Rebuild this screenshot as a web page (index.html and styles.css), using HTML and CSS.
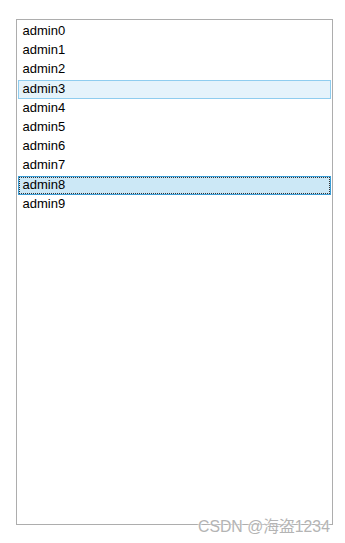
FILE: index.html
```html
<!DOCTYPE html>
<html>
<head>
<meta charset="utf-8">
<link rel="stylesheet" href="styles.css">
</head>
<body>
<div class="page">
  <ul class="listbox">
    <li class="item">admin0</li>
    <li class="item">admin1</li>
    <li class="item">admin2</li>
    <li class="item hover">admin3</li>
    <li class="item">admin4</li>
    <li class="item">admin5</li>
    <li class="item">admin6</li>
    <li class="item">admin7</li>
    <li class="item selected"><span class="focus">admin8</span></li>
    <li class="item">admin9</li>
  </ul>
  <div class="watermark">CSDN @海盗1234</div>
</div>
</body>
</html>
```
FILE: styles.css
```css
html, body {
  margin: 0;
  padding: 0;
  background: #ffffff;
}
.page {
  position: relative;
  width: 345px;
  height: 543px;
  padding: 19px 0 0 16px;
  box-sizing: border-box;
}
.listbox {
  list-style: none;
  margin: 0;
  padding: 2px 1px;
  width: 317px;
  height: 506px;
  box-sizing: border-box;
  border: 1px solid #adadad;
  font-family: "Liberation Sans", "Noto Sans CJK SC", sans-serif;
  font-size: 13px;
  color: #000;
}
.item {
  height: 19.2px;
  line-height: 16.6px;
  box-sizing: border-box;
  border: 1px solid transparent;
  padding-left: 3.5px;
}
.item.hover {
  background: #e5f3fb;
  border-color: #8fcdef;
}
.item.selected {
  background: #cce8f6;
  border-color: #3b9dd6;
  padding: 0;
}
.focus {
  display: block;
  height: 100%;
  box-sizing: border-box;
  border: 1px dotted #333;
  padding-left: 2.5px;
  line-height: 14.6px;
}
.watermark {
  position: absolute;
  left: 198px;
  top: 514px;
  font-family: "Liberation Sans", "Noto Sans CJK SC", sans-serif;
  font-size: 15.8px;
  color: #b4b4b4;
  text-shadow: 0 0 2px #fff, 0 0 2px #fff;
  white-space: nowrap;
}
```
